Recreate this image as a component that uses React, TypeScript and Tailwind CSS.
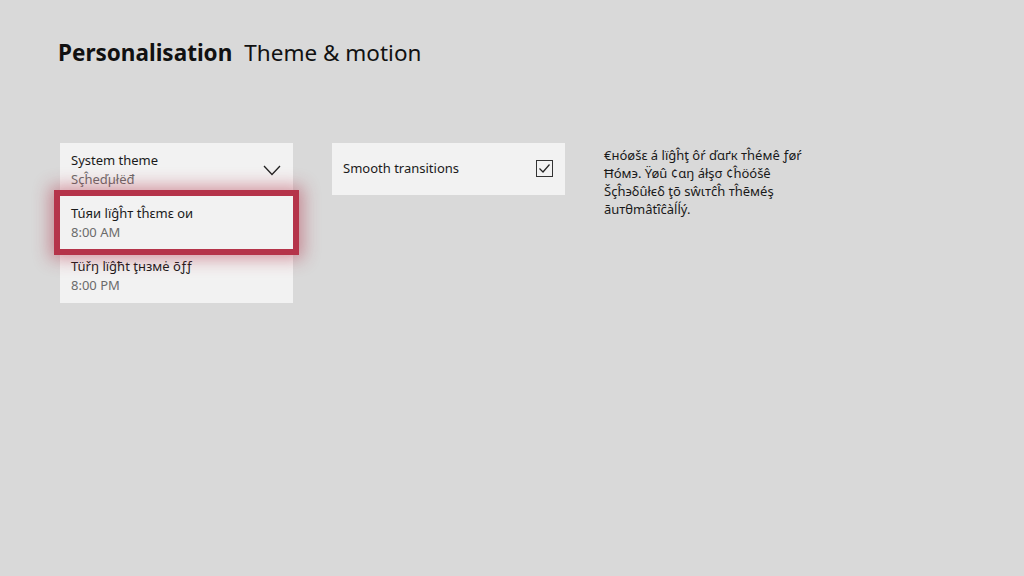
import React from 'react';

const font = { fontFamily: '"Noto Sans", "Open Sans", sans-serif' };

const descLines = [
  '€нóøšε á lïĝĥţ ôŕ ďαґк тĥéмê ƒøŕ',
  'Ħóмэ. Ÿøû ¢αŋ áłşσ ¢ĥöóšê',
  'Šçĥэδûłєδ ţō sŵιтĉĥ тĥēмéş',
  'āuтθmâťîĉàĺĺý.',
];

const ListRow = ({ title, sub, focused = false }: { title: string; sub: string; focused?: boolean }) => (
  <div
    className={
      focused
        ? 'relative z-10 h-[53px] flex flex-col justify-center px-[11px] pt-[2px] bg-[#f2f2f2] ring-[6px] ring-[#b5344a] shadow-[0_0_16px_10px_rgba(175,40,62,0.45)]'
        : 'h-[53px] flex flex-col justify-center px-[11px] pt-[2px]'
    }
  >
    <div className="text-[13px] leading-[19px] text-[#1a1a1a]">{title}</div>
    <div className="text-[13px] leading-[19px] text-[#6b6b6b]">{sub}</div>
  </div>
);

export default function App() {
  return (
    <div className="w-[1024px] h-[576px] bg-[#d9d9d9] overflow-hidden" style={font}>
      <div className="pl-[58px] pt-[36px] flex items-baseline gap-[12px] text-[#111]">
        <span className="text-[22.5px] font-bold">Personalisation</span>
        <span className="text-[22.5px]">Theme &amp; motion</span>
      </div>

      <div className="mt-[73px] pl-[60px] flex items-start gap-[39px]">
        {/* theme dropdown */}
        <div className="w-[233px] h-[160px] bg-[#f2f2f2]">
          <div className="relative">
            <ListRow title="System theme" sub="Sçĥeďµłëđ" />
            <svg className="absolute right-[12px] top-[22px]" width="18" height="11" viewBox="0 0 18 11" fill="none">
              <path d="M1 1 L9 9.5 L17 1" stroke="#222" strokeWidth="1.3" />
            </svg>
          </div>
          <ListRow title="Túяи lïĝĥт tĥεmε ои" sub="8:00 AM" focused />
          <ListRow title="Tüřŋ lïĝħt ţнзмė ōƒƒ" sub="8:00 PM" />
        </div>

        {/* smooth transitions */}
        <div className="w-[233px] h-[52px] bg-[#f2f2f2] flex items-center justify-between pl-[11px] pr-[12px]">
          <span className="text-[13px] text-[#1a1a1a]">Smooth transitions</span>
          <div className="w-[17px] h-[17px] border border-[#333] flex items-center justify-center">
            <svg width="13" height="11" viewBox="0 0 13 11" fill="none">
              <path d="M1.5 5.5 L5 9 L11.5 1.5" stroke="#222" strokeWidth="1.2" />
            </svg>
          </div>
        </div>

        {/* description */}
        <div className="pt-[3px] text-[13px] leading-[18px] text-[#1a1a1a]">
          {descLines.map((l) => (
            <div key={l}>{l}</div>
          ))}
        </div>
      </div>
    </div>
  );
}
